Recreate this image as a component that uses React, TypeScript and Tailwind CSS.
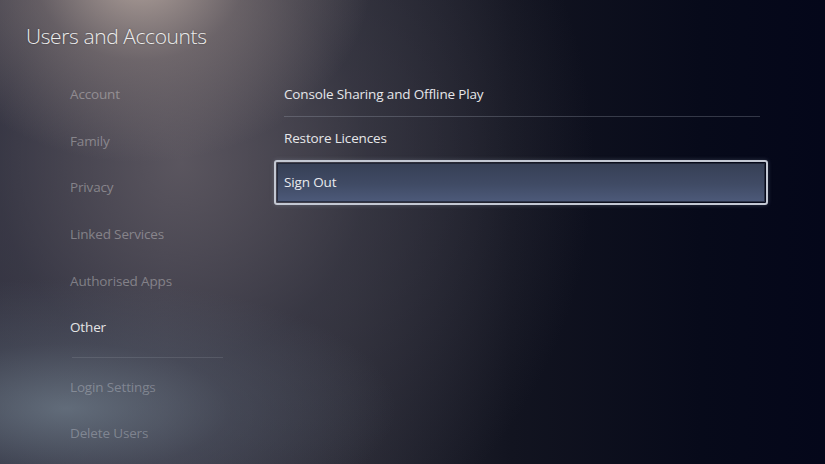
import React from 'react'

const LEFT = ['Account', 'Family', 'Privacy', 'Linked Services', 'Authorised Apps']
const LEFT_BOTTOM = ['Login Settings', 'Delete Users']

const font = "font-['Open_Sans',_'Liberation_Sans',_sans-serif]"
const item = 'flex items-center text-[13.5px] tracking-[-0.15px]'

export default function App() {
  return (
    <div
      className={`relative w-[825px] h-[464px] overflow-hidden ${font} bg-[radial-gradient(ellipse_28%_40%_at_17%_-5%,rgba(186,170,162,0.9)_0%,rgba(145,132,130,0.5)_45%,transparent_100%),radial-gradient(ellipse_40%_28%_at_8%_88%,rgba(112,126,140,0.75)_0%,rgba(90,100,115,0.35)_50%,transparent_100%),radial-gradient(ellipse_50%_95%_at_22%_35%,rgba(100,94,102,0.8)_0%,rgba(70,68,80,0.5)_45%,transparent_100%),linear-gradient(to_right,#2a2b3a_0%,#353543_20%,#272833_42%,#121420_62%,#070a1a_85%,#04071a_100%)]`}
    >
      <h1 className="pl-[26px] pt-[21px] h-[71px] text-[21px] leading-[30px] font-light text-[#ececec] tracking-[-0.4px] [text-shadow:0_0_2px_rgba(0,0,0,0.35)]">
        Users and Accounts
      </h1>
      <div className="flex">
        <nav className="w-[274px] flex flex-col">
          {LEFT.map(label => (
            <div key={label} className={`h-[46.6px] pl-[70px] ${item} text-[rgba(235,232,232,0.38)]`}>
              {label}
            </div>
          ))}
          <div className={`h-[46.6px] pl-[70px] ${item} text-[#e4e4e6]`}>Other</div>
          <div className="ml-[72px] w-[151px] h-px my-[6px] bg-[rgba(200,205,215,0.14)]" />
          {LEFT_BOTTOM.map(label => (
            <div key={label} className={`h-[46.6px] pl-[70px] ${item} text-[rgba(225,228,235,0.33)]`}>
              {label}
            </div>
          ))}
        </nav>
        <main className="w-[494px] pt-px flex flex-col">
          <div className={`h-[44px] px-[10px] ${item} text-[#e6e7ea]`}>Console Sharing and Offline Play</div>
          <div className="ml-[10px] mr-[8px] h-px bg-[rgba(170,175,190,0.28)]" />
          <div className={`h-[43px] px-[10px] ${item} text-[#e6e7ea]`}>Restore Licences</div>
          <div className="h-[45px] rounded-[3px] border-2 border-[#c3c8d3] p-px shadow-[0_0_4px_rgba(180,190,210,0.25)]">
            <div className={`h-full rounded-[1px] pl-[7px] ${item} text-[#e8eaee] bg-[linear-gradient(to_bottom,#363f55_0%,#404b65_55%,#4d5a7a_100%)] shadow-[inset_0_0_0_1px_rgba(20,24,36,0.6)]`}>
              Sign Out
            </div>
          </div>
        </main>
      </div>
    </div>
  )
}
